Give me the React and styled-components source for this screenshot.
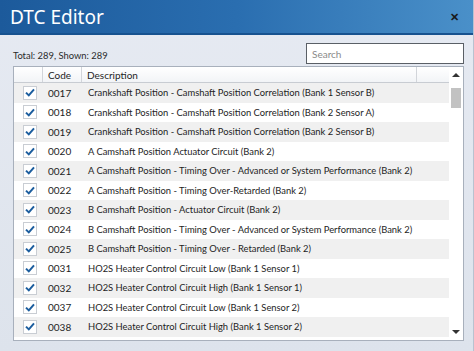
import React from "react";
import styled, { createGlobalStyle } from "styled-components";

const GlobalStyle = createGlobalStyle`
  html, body {
    margin: 0;
    padding: 0;
    background: #e3e8f0;
  }
  * {
    box-sizing: border-box;
  }
`;

const codes = [
  ["0017", "Crankshaft Position - Camshaft Position Correlation (Bank 1 Sensor B)"],
  ["0018", "Crankshaft Position - Camshaft Position Correlation (Bank 2 Sensor A)"],
  ["0019", "Crankshaft Position - Camshaft Position Correlation (Bank 2 Sensor B)"],
  ["0020", "A Camshaft Position Actuator Circuit (Bank 2)"],
  ["0021", "A Camshaft Position - Timing Over - Advanced or System Performance (Bank 2)"],
  ["0022", "A Camshaft Position - Timing Over-Retarded (Bank 2)"],
  ["0023", "B Camshaft Position - Actuator Circuit (Bank 2)"],
  ["0024", "B Camshaft Position - Timing Over - Advanced or System Performance (Bank 2)"],
  ["0025", "B Camshaft Position - Timing Over - Retarded (Bank 2)"],
  ["0031", "HO2S Heater Control Circuit Low (Bank 1 Sensor 1)"],
  ["0032", "HO2S Heater Control Circuit High (Bank 1 Sensor 1)"],
  ["0037", "HO2S Heater Control Circuit Low (Bank 1 Sensor 2)"],
  ["0038", "HO2S Heater Control Circuit High (Bank 1 Sensor 2)"],
];

const App = () => {
  return (
    <>
      <GlobalStyle />
      <Window>
        <TitleBar>
          <Title>DTC Editor</Title>
          <CloseBtn>✕</CloseBtn>
        </TitleBar>
        <Body>
          <Toolbar>
            <Count>Total: 289, Shown: 289</Count>
            <Search placeholder="Search" />
          </Toolbar>
          <Table>
            <Grid>
              <HeaderRow>
                <HeadCell />
                <HeadCell>Code</HeadCell>
                <HeadCell>Description</HeadCell>
                <HeadCell $last />
              </HeaderRow>
              {codes.map(([code, descript], index) => (
                <Row key={code} $odd={index % 2 === 0}>
                  <CheckCell>
                    <Check>
                      <svg width="10" height="9" viewBox="0 0 10 9">
                        <path
                          d="M1 4.6 L3.8 7.4 L9 1.4"
                          fill="none"
                          stroke="#1b5d9e"
                          strokeWidth="2"
                        />
                      </svg>
                    </Check>
                  </CheckCell>
                  <CodeCell>{code}</CodeCell>
                  <DescCell>{descript}</DescCell>
                </Row>
              ))}
            </Grid>
            <ScrollBar>
              <Arrow $up />
              <Track>
                <Thumb />
              </Track>
              <Arrow />
            </ScrollBar>
          </Table>
        </Body>
      </Window>
    </>
  );
};

const Window = styled.div`
  width: 474px;
  height: 351px;
  display: flex;
  flex-direction: column;
  background: linear-gradient(180deg, #e6eaf2 0%, #dde3ec 100%);
  border-right: 1px solid #b9c2d0;
  overflow: hidden;
  font-family: Lato, "Noto Sans", sans-serif;
`;

const TitleBar = styled.div`
  height: 35px;
  flex: none;
  display: flex;
  align-items: center;
  justify-content: space-between;
  padding: 0 14px 0 10px;
  background: linear-gradient(90deg, #1c5a9b 0%, #2a6eb0 50%, #4a90c9 100%);
  border-bottom: 2px solid #17528f;
`;

const Title = styled.div`
  color: #ffffff;
  font-family: "Noto Sans", sans-serif;
  font-size: 19px;
  line-height: 1;
  padding-top: 2px;
`;

const CloseBtn = styled.div`
  color: #1a1a1a;
  font-size: 11px;
  font-weight: 700;
`;

const Body = styled.div`
  flex: 1;
  display: flex;
  flex-direction: column;
  padding: 8px 9px 10px 13px;
`;

const Toolbar = styled.div`
  display: flex;
  align-items: center;
  justify-content: space-between;
  height: 21px;
  margin-bottom: 2px;
`;

const Count = styled.div`
  font-size: 9.4px;
  color: #2a2a2a;
  padding-top: 4px;
`;

const Search = styled.input`
  width: 158px;
  height: 21px;
  border: 1px solid #5a5f66;
  background: #ffffff;
  padding: 0 5px;
  font-family: inherit;
  font-size: 10px;
  color: #333;
  outline: none;
  &::placeholder {
    color: #8a8a8a;
  }
`;

const Table = styled.div`
  flex: 1;
  display: flex;
  background: #ffffff;
  border: 1px solid #a8b0bc;
  overflow: hidden;
`;

const Grid = styled.div`
  flex: 1;
  display: flex;
  flex-direction: column;
  overflow: hidden;
`;

const HeaderRow = styled.div`
  display: grid;
  grid-template-columns: 29px 39px 1fr 32px;
  height: 16px;
  flex: none;
  background: linear-gradient(180deg, #ffffff 0%, #f2f4f7 100%);
  border-bottom: 1px solid #c8ccd2;
`;

const HeadCell = styled.div`
  display: flex;
  align-items: center;
  padding-left: 5px;
  font-size: 10px;
  color: #1e1e1e;
  border-right: ${(p) => (p.$last ? "none" : "1px solid #d2d5da")};
`;

const Row = styled.div`
  display: grid;
  grid-template-columns: 29px 39px 1fr;
  height: 19.5px;
  flex: none;
  align-items: center;
  background: ${(p) => (p.$odd ? "#f0f0f0" : "#ffffff")};
`;

const CheckCell = styled.div`
  display: flex;
  justify-content: center;
  align-items: center;
`;

const Check = styled.div`
  width: 14px;
  height: 14px;
  border: 1px solid #c9cdd3;
  background: #ffffff;
  display: flex;
  align-items: center;
  justify-content: center;
  margin-left: 3px;
`;

const CodeCell = styled.div`
  font-size: 10px;
  color: #1e1e1e;
  padding-left: 5px;
`;

const DescCell = styled(CodeCell)`
  font-size: 9.4px;
  padding-left: 6px;
  white-space: nowrap;
  overflow: hidden;
`;

const ScrollBar = styled.div`
  width: 14px;
  flex: none;
  display: flex;
  flex-direction: column;
  background: #ffffff;
`;

const Arrow = styled.div`
  height: 16px;
  flex: none;
  display: flex;
  align-items: center;
  justify-content: center;
  &::after {
    content: "";
    border-left: 4px solid transparent;
    border-right: 4px solid transparent;
    ${(p) =>
      p.$up
        ? "border-bottom: 4px solid #333;"
        : "border-top: 4px solid #333;"}
  }
`;

const Track = styled.div`
  flex: 1;
  padding: 5px 2px 0 2px;
`;

const Thumb = styled.div`
  height: 20px;
  background: #c2c2c2;
`;

export default App;
